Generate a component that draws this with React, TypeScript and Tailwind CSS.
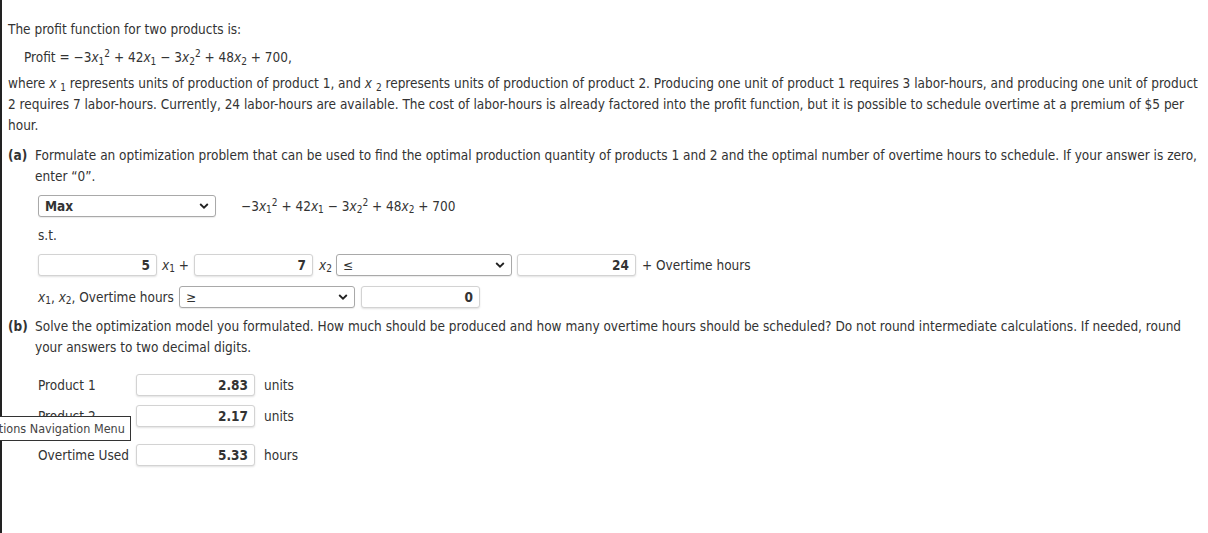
import React from 'react';

const font = { fontFamily: 'Tahoma, "DejaVu Sans Condensed", "Liberation Sans", sans-serif' };

const X = ({ n }: { n: string }) => (
  <span>
    <i>x</i>
    <sub className="text-[10px]">{n}</sub>
  </span>
);

const Sq = () => <sup className="text-[10px]">2</sup>;

const Expr = ({ comma }: { comma?: boolean }) => (
  <span>
    −3<X n="1" />
    <Sq /> + 42<X n="1" /> − 3<X n="2" />
    <Sq /> + 48<X n="2" /> + 700{comma ? ',' : ''}
  </span>
);

const Chevron = () => (
  <svg width="10" height="7" viewBox="0 0 10 7" className="absolute right-[6px] top-1/2 -translate-y-1/2">
    <path d="M1.2 1.5 L5 5.2 L8.8 1.5" fill="none" stroke="#222" strokeWidth="1.8" />
  </svg>
);

const Select = ({ label, w, bold }: { label: string; w: string; bold?: boolean }) => (
  <div
    className={`relative h-[22px] ${w} rounded-[3px] border border-[#a9a9a9] bg-white pl-[6px] flex items-center shadow-[0_1px_1px_rgba(0,0,0,0.08)] ${bold ? 'font-bold' : ''}`}
  >
    {label}
    <Chevron />
  </div>
);

const Field = ({ value, w = 'w-[119px]' }: { value: string; w?: string }) => (
  <div
    className={`h-[22px] ${w} shrink-0 rounded-[3px] border border-[#d3d3d3] bg-white pr-[6px] flex items-center justify-end font-bold shadow-[0_1px_2px_rgba(0,0,0,0.12)]`}
  >
    {value}
  </div>
);

export default function App() {
  return (
    <div className="relative h-[533px] w-[1208px] overflow-hidden bg-white text-[13.5px] text-[#333]" style={font}>
      <div className="h-full border-l-2 border-[#222] pl-[6px] pr-2">
        <p className="pt-[19px] leading-[21px]">The profit function for two products is:</p>
        <p className="mt-[7px] pl-4 leading-[21px]">
          Profit = <Expr comma />
        </p>
        <p className="mt-[5px] leading-[21px]">
          where <i>x</i> <sub className="text-[10px]">1</sub> represents units of production of product 1, and <i>x</i>{' '}
          <sub className="text-[10px]">2</sub> represents units of production of product 2. Producing one unit of product 1
          requires 3 labor-hours, and producing one unit of product 2 requires 7 labor-hours. Currently, 24 labor-hours are
          available. The cost of labor-hours is already factored into the profit function, but it is possible to schedule
          overtime at a premium of $5 per hour.
        </p>

        <div className="mt-[9px] flex leading-[21px]">
          <span className="w-[27px] shrink-0 font-bold">(a)</span>
          <p>
            Formulate an optimization problem that can be used to find the optimal production quantity of products 1 and 2
            and the optimal number of overtime hours to schedule. If your answer is zero, enter “0”.
          </p>
        </div>

        <div className="pl-[30px]">
          <div className="mt-[8px] flex items-center gap-[25px]">
            <Select label="Max" w="w-[178px]" bold />
            <Expr />
          </div>
          <p className="mt-[8px] leading-[21px]">s.t.</p>
          <div className="mt-[8px] flex items-center">
            <Field value="5" />
            <span className="ml-[5px] mr-[5px]">
              <X n="1" /> +
            </span>
            <Field value="7" />
            <span className="ml-[6px] mr-[4px]">
              <X n="2" />
            </span>
            <Select label="≤" w="w-[176px]" />
            <span className="w-[5px]" />
            <Field value="24" />
            <span className="ml-[6px]">+ Overtime hours</span>
          </div>
          <div className="mt-[10px] flex items-center">
            <span className="mr-[5px]">
              <X n="1" />, <X n="2" />, Overtime hours
            </span>
            <Select label="≥" w="w-[176px]" />
            <span className="w-[6px]" />
            <Field value="0" />
          </div>
        </div>

        <div className="mt-[8px] flex leading-[21px]">
          <span className="w-[27px] shrink-0 font-bold">(b)</span>
          <p>
            Solve the optimization model you formulated. How much should be produced and how many overtime hours should be
            scheduled? Do not round intermediate calculations. If needed, round your answers to two decimal digits.
          </p>
        </div>

        <div className="mt-[16px] flex flex-col gap-[9px] pl-[30px]">
          {[
            ['Product 1', '2.83', 'units'],
            ['Product 2', '2.17', 'units'],
            ['Overtime Used', '5.33', 'hours'],
          ].map(([l, v, u], i) => (
            <div key={l} className={`flex items-center ${i === 2 ? 'mt-[8px]' : ''}`}>
              <span className="w-[98px]">{l}</span>
              <Field value={v} />
              <span className="ml-[9px]">{u}</span>
            </div>
          ))}
        </div>
      </div>

      <div className="absolute left-[-33px] top-[416px] h-[25px] w-[164px] border border-[#333] bg-white pl-[2px] text-[12.5px] leading-[23px] text-[#444]">
        Questions Navigation Menu
      </div>
    </div>
  );
}
